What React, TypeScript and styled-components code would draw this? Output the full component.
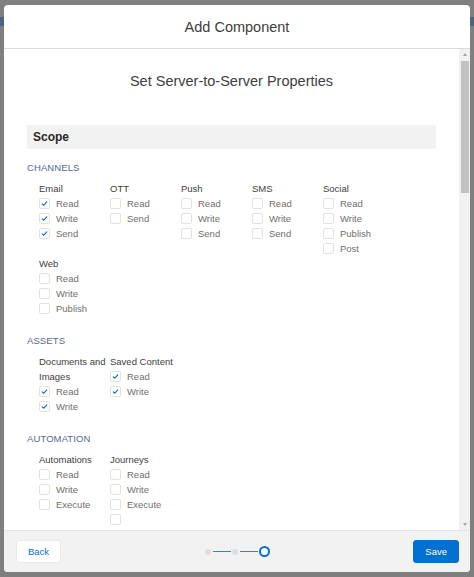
import React from "react";
import styled, { createGlobalStyle } from "styled-components";

const GlobalStyle = createGlobalStyle`
	html, body {
		margin: 0;
		padding: 0;
		background: #7f7f7f;
	}
	body {
		font-family: "Liberation Sans", Arial, sans-serif;
	}
`;

const Backdrop = styled.div`
	height: 577px;
	box-sizing: border-box;
	padding: 5px 4px;
	background: linear-gradient(
		to bottom,
		#7f7f7f 17px,
		#4c6480 17px,
		#4c6480 26px,
		#7f7f7f 26px
	);
`;

const Modal = styled.div`
	height: 567px;
	display: flex;
	flex-direction: column;
	background: #fff;
	border-radius: 4px;
	overflow: hidden;
`;

const Header = styled.header`
	flex: none;
	height: 43px;
	display: flex;
	align-items: center;
	justify-content: center;
	border-bottom: 1px solid #dddbda;
	font-size: 14.5px;
	color: #3e3e3c;
`;

const Body = styled.div`
	flex: 1;
	min-height: 0;
	display: flex;
`;

const Content = styled.div`
	flex: 1;
	min-width: 0;
	overflow: hidden;
	padding: 23px 23px 0;
`;

/* scrollbar as drawn by the browser in the shot */
const Track = styled.div`
	flex: none;
	width: 11px;
	background: #f1f1f1;
	display: flex;
	flex-direction: column;
	align-items: center;
`;

const Arrow = styled.span<{ $down?: boolean }>`
	flex: none;
	height: 11px;
	display: flex;
	align-items: center;
	justify-content: center;

	&::after {
		content: "";
		border-left: 2.5px solid transparent;
		border-right: 2.5px solid transparent;
		${(p) =>
			p.$down
				? "border-top: 3px solid #a3a3a3;"
				: "border-bottom: 3px solid #a3a3a3;"}
	}
`;

const Thumb = styled.span`
	flex: none;
	width: 8px;
	height: 132px;
	margin-top: 1px;
	background: #c1c1c1;
`;

const TrackGap = styled.span`
	flex: 1;
`;

const Subtitle = styled.h2`
	margin: 0 0 35px;
	text-align: center;
	font-size: 14.5px;
	font-weight: 400;
	line-height: 18px;
	color: #3e3e3c;
`;

const ScopeBar = styled.div`
	height: 24px;
	display: flex;
	align-items: center;
	padding-left: 6px;
	background: #f3f2f2;
	border-radius: 2px;
	font-size: 12px;
	font-weight: 700;
	color: #2b2826;
`;

const Section = styled.section<{ $first?: boolean }>`
	margin-top: ${(p) => (p.$first ? "11px" : "17px")};
`;

const SectionTitle = styled.h3`
	margin: 0 0 6px;
	font-size: 9.5px;
	line-height: 15px;
	font-weight: 400;
	color: #54698d;
	text-transform: uppercase;
	letter-spacing: 0.1px;
`;

const Groups = styled.div`
	display: flex;
	flex-wrap: wrap;
	padding-left: 12px;
`;

const Group = styled.div`
	width: 71px;
	display: flex;
	flex-direction: column;
`;

const GroupLabel = styled.div`
	font-size: 9.5px;
	line-height: 15px;
	color: #3e3e3c;
`;

const Item = styled.label`
	display: flex;
	align-items: center;
	gap: 6px;
	height: 15px;
	font-size: 9.5px;
	color: #706e6b;
	white-space: nowrap;
`;

const Box = styled.span`
	flex: none;
	width: 11px;
	height: 11px;
	box-sizing: border-box;
	border: 1px solid #e3e2e1;
	border-radius: 2px;
	background: #fff;
	display: flex;
	align-items: center;
	justify-content: center;
`;

const Footer = styled.footer`
	flex: none;
	height: 42px;
	box-sizing: border-box;
	border-top: 1px solid #e6e5e4;
	background: #f3f2f2;
	display: grid;
	grid-template-columns: 1fr auto 1fr;
	align-items: center;
	padding: 0 11px 0 12px;
`;

const Button = styled.button<{ $brand?: boolean }>`
	height: 23px;
	padding: 0 11px;
	border-radius: 3px;
	font-family: inherit;
	font-size: 9.5px;
	cursor: pointer;
	border: 1px solid ${(p) => (p.$brand ? "#0070d2" : "#ebeaea")};
	background: ${(p) => (p.$brand ? "#0070d2" : "#fff")};
	color: ${(p) => (p.$brand ? "#fff" : "#0070d2")};
	justify-self: ${(p) => (p.$brand ? "end" : "start")};
`;

const Steps = styled.div`
	display: flex;
	align-items: center;
	gap: 1.5px;
`;

const Dot = styled.span`
	width: 6px;
	height: 6px;
	border-radius: 50%;
	background: #d8dde6;
`;

const Line = styled.span`
	width: 18px;
	height: 1.5px;
	background: #1589ee;
`;

const Ring = styled.span`
	width: 11px;
	height: 11px;
	box-sizing: border-box;
	border-radius: 50%;
	border: 2.5px solid #0070d2;
	background: #fff;
`;

type Perm = { label: string; checked?: boolean };
type GroupData = { name: string; items: Perm[] };
type SectionData = { title: string; groups: GroupData[] };

const p = (labels: string, checked = false): Perm[] =>
	labels.split(",").map((label) => ({ label, checked }));

const sections: SectionData[] = [
	{
		title: "Channels",
		groups: [
			{ name: "Email", items: p("Read,Write,Send", true) },
			{ name: "OTT", items: p("Read,Send") },
			{ name: "Push", items: p("Read,Write,Send") },
			{ name: "SMS", items: p("Read,Write,Send") },
			{ name: "Social", items: p("Read,Write,Publish,Post") },
			{ name: "Web", items: p("Read,Write,Publish") },
		],
	},
	{
		title: "Assets",
		groups: [
			{ name: "Documents and Images", items: p("Read,Write", true) },
			{ name: "Saved Content", items: p("Read,Write", true) },
		],
	},
	{
		title: "Automation",
		groups: [
			{ name: "Automations", items: p("Read,Write,Execute") },
			{ name: "Journeys", items: p("Read,Write,Execute,") },
		],
	},
];

const Check = () => (
	<svg width="7" height="7" viewBox="0 0 7 7">
		<path
			d="M1.2 3.9 L2.8 5.2 L5.8 1.9"
			fill="none"
			stroke="#0070d2"
			strokeWidth="1.1"
			strokeLinecap="round"
			strokeLinejoin="round"
		/>
	</svg>
);

export default function App() {
	return (
		<>
			<GlobalStyle />
			<Backdrop>
				<Modal>
					<Header>Add Component</Header>
					<Body>
						<Content>
							<Subtitle>Set Server-to-Server Properties</Subtitle>
							<ScopeBar>Scope</ScopeBar>
							{sections.map((s, i) => (
								<Section key={s.title} $first={i === 0}>
									<SectionTitle>{s.title}</SectionTitle>
									<Groups>
										{s.groups.map((g) => (
											<Group key={g.name}>
												<GroupLabel>{g.name}</GroupLabel>
												{g.items.map((it, j) => (
													<Item key={j}>
														<Box>{it.checked && <Check />}</Box>
														{it.label}
													</Item>
												))}
											</Group>
										))}
									</Groups>
								</Section>
							))}
						</Content>
						<Track>
							<Arrow />
							<Thumb />
							<TrackGap />
							<Arrow $down />
						</Track>
					</Body>
					<Footer>
						<Button>Back</Button>
						<Steps>
							<Dot />
							<Line />
							<Dot />
							<Line />
							<Ring />
						</Steps>
						<Button $brand>Save</Button>
					</Footer>
				</Modal>
			</Backdrop>
		</>
	);
}
